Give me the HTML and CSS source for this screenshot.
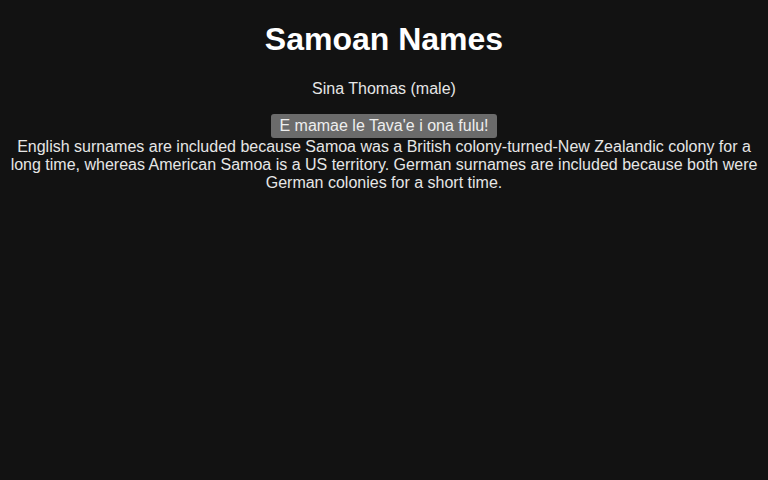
FILE: index.html
```html
<!DOCTYPE html>
<html lang="sm">
<head>
<meta charset="utf-8">
<title>Samoan Names</title>
<link rel="stylesheet" href="styles.css">
</head>
<body>
<h1 class="title">Samoan Names</h1>
<p class="name">Sina Thomas (male)</p>
<div class="actions">
  <button class="generate" type="button">E mamae le Tava'e i ona fulu!</button>
</div>
<div class="note">English surnames are included because Samoa was a British colony-turned-New Zealandic colony for a long time, whereas American Samoa is a US territory. German surnames are included because both were German colonies for a short time.</div>
</body>
</html>
```

FILE: styles.css
```css
body {
  margin: 0 8px;
  background: #121212;
  color: #e6e6e6;
  font-family: "Liberation Sans", Arial, sans-serif;
  font-size: 16px;
  text-align: center;
}

.title {
  font-size: 32px;
  font-weight: bold;
  color: #ffffff;
  margin: 21.44px 0;
}

.name {
  margin: 16px 0;
}

.actions {
  margin: 0;
}

.generate {
  font-family: "Liberation Sans", Arial, sans-serif;
  font-size: 16px;
  color: #eeeeee;
  background: #6b6b6b;
  border: none;
  border-radius: 3px;
  padding: 3px 8px;
  line-height: normal;
}

.note {
  margin: 0;
}
```
